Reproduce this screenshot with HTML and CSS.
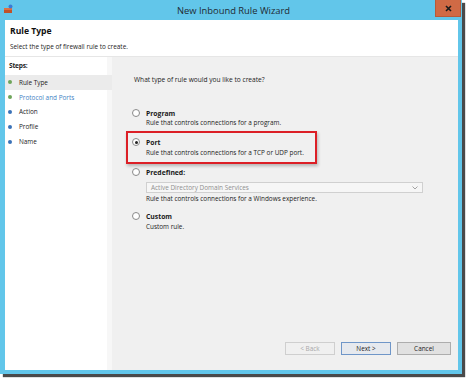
FILE: index.html
```html
<!DOCTYPE html>
<html>
<head>
<meta charset="utf-8">
<link rel="stylesheet" href="styles.css">
</head>
<body>
<div class="window">
  <div class="titlebar">
    <svg class="appicon" width="11" height="10" viewBox="0 0 11 10">
      <rect x="1" y="4" width="8" height="5" fill="#c0522a"/>
      <rect x="1" y="4" width="8" height="2" fill="#e07040"/>
      <circle cx="7.5" cy="2.5" r="2" fill="#3a7bd5"/>
    </svg>
    <div class="title">New Inbound Rule Wizard</div>
    <div class="close">
      <svg width="7" height="7" viewBox="0 0 7 7"><path d="M1 1L6 6M6 1L1 6" stroke="#1a1a1a" stroke-width="1.6"/></svg>
    </div>
  </div>
  <div class="client">
    <div class="header">
      <div class="h-title">Rule Type</div>
      <div class="h-sub">Select the type of firewall rule to create.</div>
    </div>
    <div class="body">
      <div class="steps">
        <div class="steps-label">Steps:</div>
        <div class="step current"><span class="dot green"></span>Rule Type</div>
        <div class="step link"><span class="dot green"></span>Protocol and Ports</div>
        <div class="step"><span class="dot blue"></span>Action</div>
        <div class="step"><span class="dot blue"></span>Profile</div>
        <div class="step"><span class="dot blue"></span>Name</div>
      </div>
      <div class="main">
        <div class="question">What type of rule would you like to create?</div>
        <div class="options">
          <div class="opt first">
            <div class="opt-row"><span class="radio"></span><span class="opt-label">Program</span></div>
            <div class="opt-desc">Rule that controls connections for a program.</div>
          </div>
          <div class="opt highlighted">
            <div class="opt-row"><span class="radio checked"></span><span class="opt-label">Port</span></div>
            <div class="opt-desc">Rule that controls connections for a TCP or UDP port.</div>
          </div>
          <div class="opt predefined">
            <div class="opt-row"><span class="radio"></span><span class="opt-label">Predefined:</span></div>
            <div class="select"><span>Active Directory Domain Services</span>
              <svg width="6" height="4" viewBox="0 0 6 4"><path d="M0.5 0.5L3 3L5.5 0.5" stroke="#9a9a9a" fill="none" stroke-width="0.9"/></svg>
            </div>
            <div class="opt-desc">Rule that controls connections for a Windows experience.</div>
          </div>
          <div class="opt custom">
            <div class="opt-row"><span class="radio"></span><span class="opt-label">Custom</span></div>
            <div class="opt-desc">Custom rule.</div>
          </div>
        </div>
        <div class="buttons">
          <div class="btn disabled">&lt; Back</div>
          <div class="btn default">Next &gt;</div>
          <div class="btn wide">Cancel</div>
        </div>
      </div>
    </div>
  </div>
</div>
</body>
</html>
```
FILE: styles.css
```css
html, body {
  margin: 0;
  padding: 0;
  background: #ffffff;
  width: 474px;
  height: 384px;
  overflow: hidden;
  font-family: "Open Sans", "Noto Sans", sans-serif;
  color: #1e1e1e;
}
.window {
  width: 453px;
  height: 370px;
  background: #62c6ea;
  padding: 0 4px 4px 5px;
  box-sizing: content-box;
  box-shadow: 3px 3px 1px #4a4a4a;
  display: flex;
  flex-direction: column;
}
.titlebar {
  height: 20px;
  display: flex;
  align-items: center;
}
.appicon {
  margin-left: -2px;
  margin-top: -2px;
}
.title {
  flex: 1;
  text-align: center;
  font-size: 9.4px;
  color: #1f2a33;
  padding-left: 18px;
}
.close {
  width: 26px;
  height: 17px;
  align-self: flex-start;
  background: #d06a45;
  display: flex;
  align-items: center;
  justify-content: center;
  margin-right: -3px;
  border: 1px solid #b85a38;
  border-top: none;
  box-sizing: border-box;
}
.client {
  flex: 1;
  background: #fff;
  display: flex;
  flex-direction: column;
}
.header {
  height: 37px;
  padding: 6px 0 0 5px;
  box-sizing: border-box;
  border-bottom: 1px solid #e6e6e6;
}
.h-title {
  font-weight: bold;
  font-size: 8.6px;
  color: #111;
  line-height: 11px;
}
.h-sub {
  font-size: 6.4px;
  margin-top: 5px;
  color: #222;
}
.body {
  flex: 1;
  display: flex;
}
.steps {
  width: 107px;
  background: linear-gradient(to right, #fff 0, #fff 102px, #f7f7f7 102px);
  padding-top: 2px;
  box-sizing: border-box;
}
.steps-label {
  font-size: 6.6px;
  font-weight: bold;
  padding-left: 4px;
  height: 16px;
  line-height: 13px;
  letter-spacing: -0.2px;
}
.step {
  font-size: 6.4px;
  height: 14.8px;
  display: flex;
  align-items: center;
  padding-left: 3px;
  color: #222;
}
.step.current {
  background: #ebebeb;
  width: 105px;
}
.step.link {
  color: #3f7fc4;
}
.dot {
  width: 4px;
  height: 4px;
  border-radius: 50%;
  margin-right: 7px;
}
.dot.green { background: #6ea55a; }
.dot.blue { background: #3a72b8; }
.main {
  flex: 1;
  background: #f0f0f0;
  display: flex;
  flex-direction: column;
  padding-left: 20px;
  padding-right: 7px;
}
.question {
  font-size: 6.6px;
  margin-top: 18px;
  margin-left: 2px;
  line-height: 10px;
  color: #222;
}
.options {
  display: flex;
  flex-direction: column;
}
.opt-row {
  display: flex;
  align-items: center;
  height: 10px;
}
.radio {
  width: 6px;
  height: 6px;
  border-radius: 50%;
  border: 1px solid #8a8a8a;
  background: #fff;
  margin-right: 6px;
  box-sizing: content-box;
  position: relative;
  flex: none;
}
.radio.checked::after {
  content: "";
  position: absolute;
  left: 1.5px;
  top: 1.5px;
  width: 3px;
  height: 3px;
  border-radius: 50%;
  background: #222;
}
.opt-label {
  font-size: 6.8px;
  font-weight: bold;
  color: #1a1a1a;
}
.opt-desc {
  font-size: 6.4px;
  margin-left: 14px;
  color: #222;
  line-height: 10px;
}
.opt.first {
  margin-top: 23px;
}
.opt.highlighted {
  margin: 3px 0 3px -6px;
  width: 191px;
  border: 2px solid #dc1f26;
  padding: 4px 0 4px 4px;
  box-sizing: border-box;
  box-shadow: 1px 2px 3px rgba(0,0,0,0.25);
}
.opt.highlighted .opt-desc {
  margin-top: 1px;
}
.select {
  margin: 5px 0 1px 14px;
  width: 277px;
  height: 11px;
  border: 1px solid #d0d0d0;
  background: #f6f6f6;
  box-sizing: border-box;
  display: flex;
  align-items: center;
  justify-content: space-between;
  padding: 0 4px;
  font-size: 6.4px;
  color: #8f8f8f;
}
.opt.custom {
  margin-top: 7px;
}
.opt.custom .opt-desc {
  margin-top: 1px;
}
.buttons {
  margin-top: auto;
  margin-bottom: 15px;
  display: flex;
  justify-content: flex-end;
  gap: 6px;
}
.btn {
  width: 50px;
  height: 13px;
  box-sizing: border-box;
  border: 1px solid #adadad;
  background: #e1e1e1;
  font-size: 6.4px;
  display: flex;
  align-items: center;
  justify-content: center;
  color: #222;
}
.btn.disabled {
  color: #a8a8a8;
  border-color: #cfcfcf;
  background: #f0f0f0;
}
.btn.default {
  border-color: #6f96c8;
  background: #e6e9ee;
}
.btn.wide {
  width: 54px;
}
```
